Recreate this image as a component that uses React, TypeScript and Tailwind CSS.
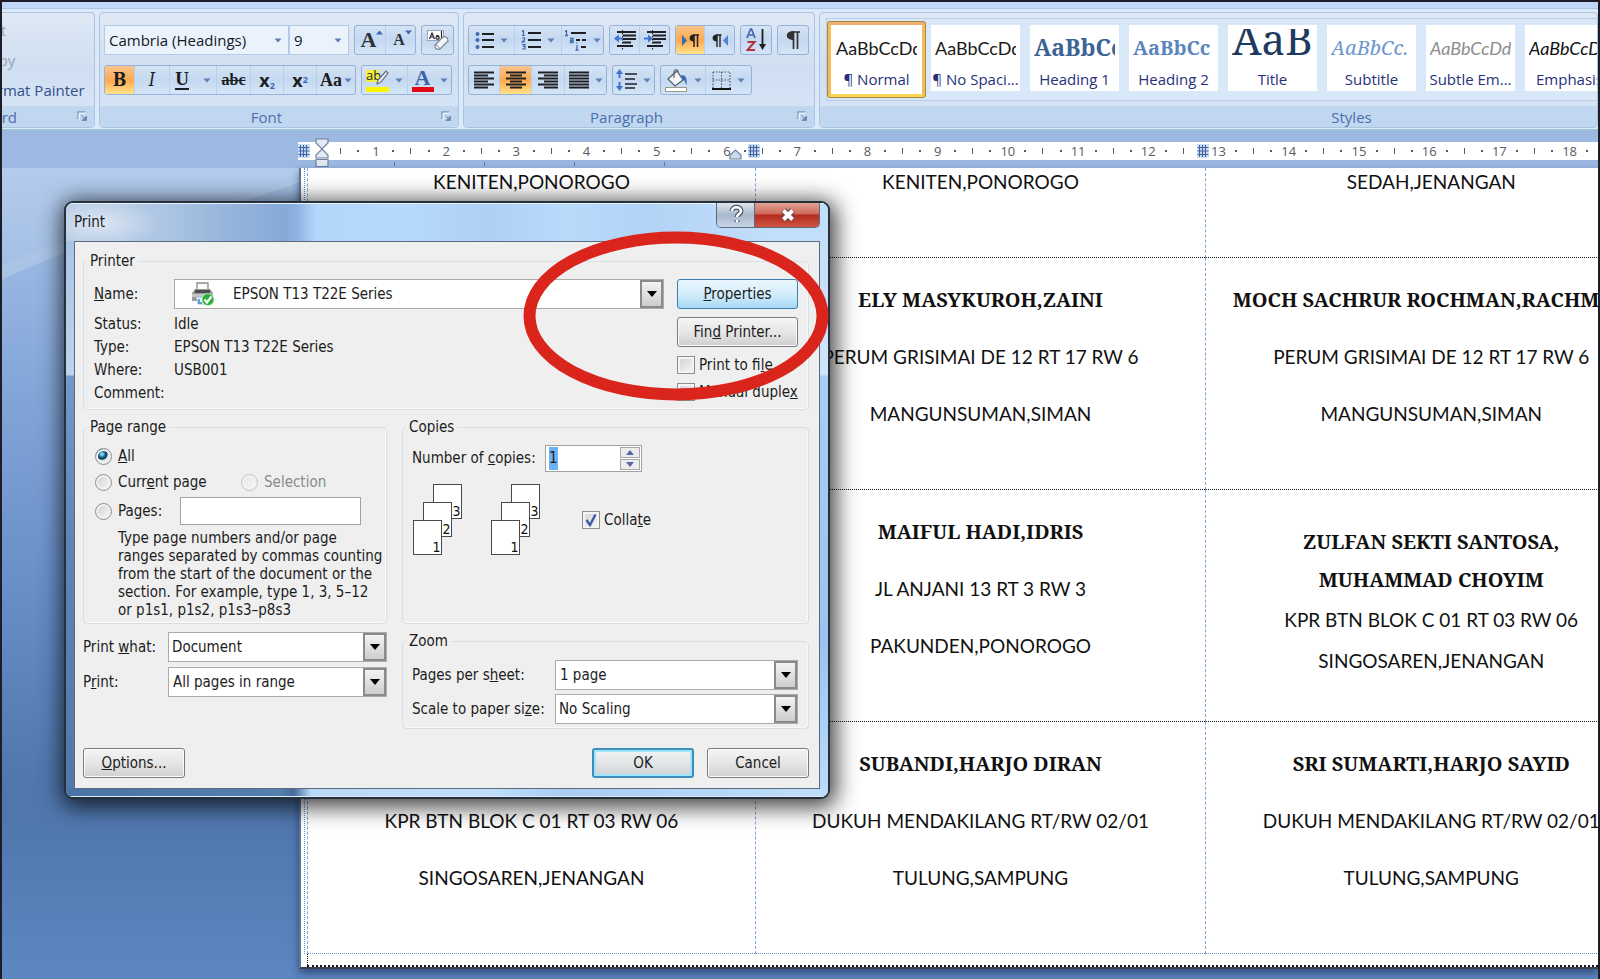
import { useEffect, useRef } from "react";
import type { ReactNode } from "react";

/* ---------- shared bits ---------- */

function Caret() {
  return (
    <svg width="8" height="5" viewBox="0 0 8 5" className="shrink-0" aria-hidden="true">
      <path d="M0.5 0.5h7L4 4.5z" fill="#5c7fb4" />
    </svg>
  );
}

function Cluster({ children }: { children: ReactNode }) {
  return (
    <div className="flex h-[30px] divide-x divide-[#b9cfea] overflow-hidden rounded-[3px] border border-[#96b2d8] bg-gradient-to-b from-[#d6e4f5] via-[#c4d8f0] to-[#d5e5f7]">
      {children}
    </div>
  );
}

function Tool({ label, active, className, children }: { label: string; active?: boolean; className: string; children: ReactNode }) {
  const tone = active ? "bg-gradient-to-b from-[#f9c48c] via-[#fba94e] to-[#ffe28a]" : "";
  return (
    <button type="button" aria-label={label} className={`flex items-center justify-center gap-1.5 ${tone} ${className}`}>
      {children}
    </button>
  );
}

function Launcher() {
  return (
    <svg width="11" height="11" viewBox="0 0 11 11" aria-hidden="true">
      <path d="M1 8V1h7" fill="none" stroke="#7d97bd" strokeWidth="1.4" />
      <path d="M2.2 8.5V2.2H8.5" fill="none" stroke="#fff" strokeWidth="1" />
      <path d="M4.5 4.5l3.5 3.5M9.5 5v4.5H5z" fill="#7088ad" stroke="#7088ad" strokeWidth="1" />
    </svg>
  );
}

function RibbonGroup({ title, className, titleClass = "pr-2 text-center", launcher = true, children }: { title: string; className: string; titleClass?: string; launcher?: boolean; children: ReactNode }) {
  return (
    <section className={`flex flex-col overflow-hidden rounded-[4px] border border-[#a9c3e2] bg-gradient-to-b from-[#dfe9f5] via-[#cfdef1] to-[#d9e8f8] ${className}`}>
      <div className="h-[93px]">{children}</div>
      <div className="flex h-[21px] items-center bg-[#c1d7f0] text-[#4a70ad]">
        <h2 className={`flex-1 text-[15px] leading-5 whitespace-nowrap ${titleClass}`}>{title}</h2>
        {launcher && <button type="button" aria-label={`${title} settings`} className="mr-[6px]"><Launcher /></button>}
      </div>
    </section>
  );
}

/* ---------- paragraph icons ---------- */

function Bullets() {
  return (
    <svg width="19" height="19" viewBox="0 0 19 19" aria-hidden="true">
      {[3, 9, 16].map((y) => (
        <g key={y}>
          <circle cx="2.5" cy={y} r="2" fill="#3f68b0" />
          <path d={`M7 ${y}h12`} stroke="#1f1f24" strokeWidth="2" />
        </g>
      ))}
    </svg>
  );
}

function Numbering() {
  return (
    <svg width="20" height="20" viewBox="0 0 20 20" aria-hidden="true">
      <path d="M7 3h13M7 10h13M7 17h13" stroke="#1f1f24" strokeWidth="2" />
      <path d="M1 1.5l1.5-1v5M1 5.5h3M1 8h2.5v2L1 12h3M1 14.5h3l-1.500 2h1.500v2.500H1" fill="none" stroke="#3f68b0" strokeWidth="1.200" />
    </svg>
  );
}

function Multilevel() {
  return (
    <svg width="23" height="21" viewBox="0 0 23 21" aria-hidden="true">
      <path d="M7 3h15M12 10h4M18 10h4M17 17h5" stroke="#1f1f24" strokeWidth="2" />
      <path d="M1 1.500l1.500-1v5M1 5.500h3M6 8.500h3v4H6.500v-2H9M13 15v5M13 12.500v1M11.500 20h3" fill="none" stroke="#3f68b0" strokeWidth="1.300" />
    </svg>
  );
}

function Indent({ out }: { out?: boolean }) {
  return (
    <svg width="22" height="20" viewBox="0 0 22 20" aria-hidden="true">
      <path d="M3 2h19M9 5.500h13M9 9h13M9 12.500h8M3 16h16" stroke="#1f1f24" strokeWidth="2" />
      <path d="M8.500 0v20" stroke="#1f1f24" strokeWidth="1" strokeDasharray="1.500 1.500" />
      {out ? <path d="M0 8.500l5-4v3h4v2H5v3z" fill="#3f74d0" /> : <path d="M9 8.500l-5-4v3H0v2h4v3z" fill="#3f74d0" />}
    </svg>
  );
}

const alignRows: Record<string, [number, number][]> = {
  left: [[0, 20], [0, 14], [0, 20], [0, 14], [0, 20], [0, 14]],
  center: [[0, 20], [4, 16], [0, 20], [4, 16], [0, 20], [4, 16]],
  right: [[0, 20], [6, 20], [0, 20], [6, 20], [0, 20], [6, 20]],
  full: [[0, 20], [0, 20], [0, 20], [0, 20], [0, 20], [0, 20]],
};

function Align({ kind }: { kind: string }) {
  return (
    <svg width="20" height="18" viewBox="0 0 20 18" aria-hidden="true">
      {alignRows[kind].map(([a, b], i) => (
        <path key={i} d={`M${a} ${1.5 + i * 3}H${b}`} stroke="#1f1f24" strokeWidth="1.900" />
      ))}
    </svg>
  );
}

function Spacing() {
  return (
    <svg width="21" height="22" viewBox="0 0 21 22" aria-hidden="true">
      <path d="M9 5h12M9 10h10M9 15h12M9 19h10" stroke="#1f1f24" strokeWidth="1.700" />
      <path d="M3.500 0L7 5H4.500v4h-2V5H0zM3.500 22L0 17h2.500v-4h2v4H7z" fill="#3f74d0" />
    </svg>
  );
}

function Sort() {
  return (
    <svg width="21" height="24" viewBox="0 0 21 24" aria-hidden="true">
      <path d="M1 10L4.500 1h1L9 10M2.500 7h5" fill="none" stroke="#3f68b0" strokeWidth="1.700" />
      <path d="M1.500 14h7L1.500 22h7.500" fill="none" stroke="#b0303c" strokeWidth="2" />
      <path d="M16.500 1v17" stroke="#1f1f24" strokeWidth="1.800" />
      <path d="M13 16h7l-3.500 6z" fill="#1f1f24" />
    </svg>
  );
}

function PaintBucket() {
  return (
    <svg width="23" height="23" viewBox="0 0 23 23" aria-hidden="true">
      <path d="M3 10L12 2l6 9-8 6z" fill="#f4f7fb" stroke="#59606c" strokeWidth="1.300" />
      <path d="M9 9V3c0-3 4-3 4 0" fill="none" stroke="#59606c" strokeWidth="1.200" />
      <path d="M16 6c6 0 6 5 5.500 10-2-3-1-5-3.500-5z" fill="#3668b8" />
      <rect x="0.500" y="18.500" width="21" height="4" fill="#fff" stroke="#9a9688" />
    </svg>
  );
}

function Borders() {
  return (
    <svg width="19" height="19" viewBox="0 0 19 19" aria-hidden="true">
      <path d="M1 1h17v16M1 1v16M9.500 1v16M1 9h17" fill="none" stroke="#4c5563" strokeWidth="1.200" strokeDasharray="1.400 1.500" />
      <path d="M0 18h19" stroke="#111" strokeWidth="2" />
    </svg>
  );
}

function Eraser() {
  return (
    <svg width="22" height="23" viewBox="0 0 22 23" aria-hidden="true">
      <rect x="0.500" y="1.500" width="16" height="10" fill="#fff" stroke="#9aa5b5" />
      <path d="M2.500 10L5 4l2.500 6M3.500 8h3M9 7c2-1 3 0 3 1v2c-2 .5-3.500 0-3-1.500s2-1 3-1M14.500 2v8" fill="none" stroke="#23262c" strokeWidth="1.200" />
      <path d="M8 16l8-8c3-1 5 1 5 4l-8 8c-3 1-6-1-5-4z" fill="#f6f6f8" stroke="#7c8595" strokeWidth="1.200" />
      <path d="M8 16c2 0 4 2 5 4" fill="none" stroke="#7c8595" />
    </svg>
  );
}

function RibbonRows({ children }: { children: ReactNode }) {
  return <div className="flex flex-col gap-[10px] px-1 pt-3">{children}</div>;
}

function FontGroup() {
  return (
    <RibbonGroup title="Font" className="w-[360px] shrink-0">
      <RibbonRows>
        <div className="flex">
          <div className="flex h-[30px] text-[15px] text-[#15181f]">
            <button type="button" className="flex w-[185px] items-center justify-between border border-[#b3cbe8] bg-[#eaf2fc] pr-1.5 pl-1">
              <span>Cambria (Headings)</span><Caret />
            </button>
            <button type="button" className="flex w-[60px] items-center justify-between border border-[#b3cbe8] bg-[#eaf2fc] pr-1.5 pl-1">
              <span>9</span><Caret />
            </button>
          </div>
          <div className="ml-[5px] flex gap-[5px] font-['Liberation_Serif',serif] font-bold text-[#2c3038]">
            <Cluster>
              <Tool label="Grow font" className="w-[31px] pl-1">
                <span className="flex text-[22px] leading-7">A<svg width="7" height="5" viewBox="0 0 7 5" className="mt-1" aria-hidden="true"><path d="M0 4.500L3.500 0.500 7 4.500z" fill="#3f68b0" /></svg></span>
              </Tool>
              <Tool label="Shrink font" className="w-[29px] pl-1">
                <span className="flex text-[16px] leading-8">A<svg width="7" height="5" viewBox="0 0 7 5" className="mt-1.5" aria-hidden="true"><path d="M0 0.500h7L3.500 4.500z" fill="#3f68b0" /></svg></span>
              </Tool>
            </Cluster>
            <Cluster><Tool label="Clear formatting" className="w-[31px]"><Eraser /></Tool></Cluster>
          </div>
        </div>
        <div className="flex gap-[5px] font-['Liberation_Serif',serif] text-[20px] leading-7 text-[#1c1e23]">
          <Cluster>
            <Tool label="Bold" active className="w-[30px]"><span className="font-['DejaVu_Serif_Condensed',serif] text-[18px] font-bold">B</span></Tool>
            <Tool label="Italic" className="w-[35px]"><span className="font-['DejaVu_Serif_Condensed',serif] text-[18px] italic">I</span></Tool>
            <Tool label="Underline" className="w-[47px]"><span className="border-b-2 border-[#1c1e23] text-[19px] leading-[18px] font-bold">U</span><span className="w-0.5" /><Caret /></Tool>
            <Tool label="Strikethrough" className="w-[34px]"><span className="text-[16px] font-bold line-through">abc</span></Tool>
            <Tool label="Subscript" className="w-[33px]"><span className="font-['Open_Sans',sans-serif] text-[18px] font-bold">x<sub className="text-[9px] text-[#3f68b0]">2</sub></span></Tool>
            <Tool label="Superscript" className="w-[33px]"><span className="font-['Open_Sans',sans-serif] text-[18px] font-bold">x<sup className="text-[9px] text-[#3f68b0]">2</sup></span></Tool>
            <Tool label="Change case" className="w-[38px]"><span className="-mr-1 text-[18px] font-bold">Aa</span><Caret /></Tool>
          </Cluster>
          <Cluster>
            <Tool label="Text highlight" className="w-[46px]">
              <svg width="23" height="23" viewBox="0 0 23 23" aria-hidden="true">
                <rect x="0" y="1" width="13" height="12" fill="#f4f03c" />
                <text x="0" y="11" fontFamily="Open Sans" fontSize="13" fill="#23262c">ab</text>
                <path d="M20 2l2 2-7 9-4 2 1-4z" fill="#e7ecf4" stroke="#5f6f8a" strokeWidth="1.200" />
                <rect x="0" y="18" width="23" height="5" fill="#fdf500" />
              </svg>
              <Caret />
            </Tool>
            <Tool label="Font colour" className="w-[43px]">
              <span className="flex w-[22px] flex-col items-center border-b-[5px] border-[#e30613] text-[22px] leading-[18px] font-bold text-[#3d64a8]">A</span>
              <Caret />
            </Tool>
          </Cluster>
        </div>
      </RibbonRows>
    </RibbonGroup>
  );
}

function ParagraphGroup() {
  return (
    <RibbonGroup title="Paragraph" className="w-[352px] shrink-0">
      <RibbonRows>
        <div className="flex gap-[5px]">
          <Cluster>
            <Tool label="Bullets" className="w-[46px]"><Bullets /><Caret /></Tool>
            <Tool label="Numbering" className="w-[47px]"><Numbering /><Caret /></Tool>
            <Tool label="Multilevel list" className="w-[41px]"><Multilevel /><Caret /></Tool>
          </Cluster>
          <Cluster>
            <Tool label="Decrease indent" className="w-[30px]"><Indent out /></Tool>
            <Tool label="Increase indent" className="w-[29px]"><Indent /></Tool>
          </Cluster>
          <Cluster>
            <Tool label="Left-to-right" active className="w-[29px]">
              <svg width="17" height="13" viewBox="0 0 17 13" aria-hidden="true"><path d="M0 1l5 5.500L0 12z" fill="#3f68b0" /><path d="M12 1v12M15.500 1v12M17 1h-6" stroke="#222" strokeWidth="1.500" /><path d="M12 0.500v7C6 7.500 6 0.500 12 0.500z" fill="#222" /></svg>
            </Tool>
            <Tool label="Right-to-left" className="w-[29px]">
              <svg width="17" height="13" viewBox="0 0 17 13" aria-hidden="true"><path d="M17 1l-5 5.500 5 5.500z" fill="#4f83d0" /><path d="M6 1v12M9 1v12M10.500 1H5" stroke="#222" strokeWidth="1.400" /><path d="M6 0.500v7C0 7.500 0 0.500 6 0.500z" fill="#222" /></svg>
            </Tool>
          </Cluster>
          <Cluster><Tool label="Sort" className="w-[30px]"><Sort /></Tool></Cluster>
          <Cluster>
            <Tool label="Show marks" className="w-[30px]">
              <svg width="14" height="18" viewBox="0 0 14 18" aria-hidden="true"><path d="M7.500 1v17M11.500 1v17M14 1H6" stroke="#333" strokeWidth="1.700" /><path d="M7.500 0v9C-1.500 9-1.500 0 7.500 0z" fill="#333" /></svg>
            </Tool>
          </Cluster>
        </div>
        <div className="flex gap-[5px]">
          <Cluster>
            <Tool label="Align left" className="w-[31px]"><Align kind="left" /></Tool>
            <Tool label="Centre" active className="w-[32px]"><Align kind="center" /></Tool>
            <Tool label="Align right" className="w-[33px]"><Align kind="right" /></Tool>
            <Tool label="Justify" className="w-[41px]"><Align kind="full" /><Caret /></Tool>
          </Cluster>
          <Cluster><Tool label="Line spacing" className="w-[41px]"><Spacing /><Caret /></Tool></Cluster>
          <Cluster>
            <Tool label="Shading" className="w-[45px]"><PaintBucket /><Caret /></Tool>
            <Tool label="Borders" className="w-[45px]"><Borders /><Caret /></Tool>
          </Cluster>
        </div>
      </RibbonRows>
    </RibbonGroup>
  );
}

const styles = [
  { name: "¶ Normal", sample: "AaBbCcDd", look: "font-['Lato',sans-serif] text-[18px] leading-[37px] text-[#1a1a1a]", on: true },
  { name: "¶ No Spaci...", sample: "AaBbCcDd", look: "font-['Lato',sans-serif] text-[18px] leading-[37px] text-[#1a1a1a]" },
  { name: "Heading 1", sample: "AaBbCc", look: "font-['Noto_Serif',serif] text-[23px] leading-[40px] font-bold text-[#3b6396]" },
  { name: "Heading 2", sample: "AaBbCc", look: "font-['Noto_Serif',serif] text-[20px] leading-[38px] font-bold text-[#5b86bd]" },
  { name: "Title", sample: "AaB", look: "font-['Noto_Serif',serif] text-[42px] leading-[56px] text-[#1e3a5f]" },
  { name: "Subtitle", sample: "AaBbCc.", look: "font-['Noto_Serif',serif] text-[20px] leading-[38px] italic text-[#6d97cc]" },
  { name: "Subtle Em...", sample: "AaBbCcDd", look: "font-['Lato',sans-serif] text-[18px] leading-[37px] italic text-[#8d8d8d]" },
  { name: "Emphasis", sample: "AaBbCcDd", look: "font-['Lato',sans-serif] text-[18px] leading-[37px] italic text-[#111]" },
];

function StylesGroup() {
  return (
    <RibbonGroup title="Styles" className="min-w-0 flex-1" titleClass="pl-[286px] text-center" launcher={false}>
      <div className="mt-[5px] ml-[6px] flex h-[83px] border-y border-l border-[#b9cfe9] bg-[#d9e8f8]">
        {styles.map((s) => (
          <button
            key={s.name}
            type="button"
            className={`my-0.5 flex w-[99px] shrink-0 flex-col items-center border-[4px] ${s.on ? "rounded-[3px] border-t-[#f0b070] border-r-[#f5bd58] border-b-[#fbd652] border-l-[#f5bd58] bg-white outline-1 -outline-offset-1 outline-[#a8864c]" : "border-transparent"}`}
          >
            <span className="flex h-[66px] w-[89px] flex-col bg-white px-1 pt-1">
              <span className={`flex h-[38px] items-end overflow-hidden whitespace-nowrap ${s.look}`}>{s.sample}</span>
              <span className="-mx-2 text-center text-[15px] leading-6 whitespace-nowrap text-[#28307a]">{s.name}</span>
            </span>
          </button>
        ))}
      </div>
    </RibbonGroup>
  );
}

function Ribbon() {
  return (
    <header className="bg-[#d3e3f6]">
      <div className="h-[6px] bg-[#c1d8f8]" />
      <div className="flex gap-1 overflow-hidden border-t border-[#a9c4e8] border-b-2 border-b-[#9cc4d8] bg-[#dbe9f8] pt-[3px] pb-px">
        <RibbonGroup title="Clipboard" className="-ml-1 w-[97px] shrink-0" titleClass="-ml-[50px] text-left">
          <div className="-ml-[19px] flex flex-col items-start gap-[10px] pt-[7px] text-[15px] leading-5 whitespace-nowrap">
            <button type="button" className="pl-0.5 text-[#9aa3b0]">Cut</button>
            <button type="button" className="text-[#9aa3b0]">Copy</button>
            <button type="button" className="text-[#34508c]">Format Painter</button>
          </div>
        </RibbonGroup>
        <FontGroup />
        <ParagraphGroup />
        <StylesGroup />
      </div>
    </header>
  );
}

/* ---------- ruler ---------- */

function GridMark() {
  return (
    <svg width="12" height="14" viewBox="0 0 12 14" aria-hidden="true">
      <rect width="12" height="14" fill="#cfe0f5" />
      <path d="M2.500 1v12M5.500 1v12M8.500 1v12M0.500 3.500h11M0.500 7h11M0.500 10.500h11" stroke="#3f66a3" strokeWidth="1.200" />
    </svg>
  );
}

function Ruler() {
  return (
    <div className="relative bg-[#9cb9e2] pt-[11px]">
      <div className="ml-[296px] flex h-[18px] bg-white pr-0.5 pl-[34px]">
        {Array.from({ length: 18 }, (_, i) => (
          <div key={i} className="grid flex-1 grid-cols-4 place-items-center text-[13px] leading-[18px] text-[#555b66]">
            <span className="h-1.5 w-px bg-[#555b66]" />
            <span className="size-0.5 bg-[#555b66]" />
            <span>{i + 1}</span>
            <span className="size-0.5 bg-[#555b66]" />
          </div>
        ))}
      </div>
      <div className="ml-[303px] flex h-2">
        {[0, 1, 2, 3].map((i) => (
          <span key={i} className="mt-0.5 h-1 w-[90px] border-r border-[#5f7ba8]" />
        ))}
      </div>
      <span className="absolute top-[13px] left-[296px]"><GridMark /></span>
      <span className="absolute top-[13px] left-[746px]"><GridMark /></span>
      <span className="absolute top-[13px] left-[1195px]"><GridMark /></span>
      <svg width="14" height="30" viewBox="0 0 14 30" className="absolute top-[7px] left-[313px]" aria-hidden="true">
        <path d="M1 1h12v4L7 11 1 5zM1 20v-3l6-6 6 6v3zM1 21.500h12v7H1z" fill="#e2e9f3" stroke="#6f829f" strokeWidth="1.200" />
      </svg>
      <svg width="13" height="11" viewBox="0 0 13 11" className="absolute top-[18px] left-[727px]" aria-hidden="true">
        <path d="M1 10V6l5.500-5L12 6v4z" fill="#cdd9ea" stroke="#6f829f" strokeWidth="1.200" />
      </svg>
    </div>
  );
}

/* ---------- document ---------- */

type Label = { names: string[]; lines: string[] };

const topRow = ["KENITEN,PONOROGO", "KENITEN,PONOROGO", "SEDAH,JENANGAN"];
const rows: Label[][] = [
  [
    { names: ["ELY MASYKUROH,ZAINI"], lines: ["PERUM GRISIMAI DE 12 RT 17 RW 6", "MANGUNSUMAN,SIMAN"] },
    { names: ["MOCH SACHRUR ROCHMAN,RACHMAD"], lines: ["PERUM GRISIMAI DE 12 RT 17 RW 6", "MANGUNSUMAN,SIMAN"] },
  ],
  [
    { names: ["MAIFUL HADI,IDRIS"], lines: ["JL ANJANI 13 RT 3 RW 3", "PAKUNDEN,PONOROGO"] },
    { names: ["ZULFAN SEKTI SANTOSA,", "MUHAMMAD CHOYIM"], lines: ["KPR BTN BLOK C 01 RT 03 RW 06", "SINGOSAREN,JENANGAN"] },
  ],
  [
    { names: ["SUBANDI,HARJO DIRAN"], lines: ["DUKUH MENDAKILANG RT/RW 02/01", "TULUNG,SAMPUNG"] },
    { names: ["SRI SUMARTI,HARJO SAYID"], lines: ["DUKUH MENDAKILANG RT/RW 02/01", "TULUNG,SAMPUNG"] },
  ],
];
const lastLeft = ["KPR BTN BLOK C 01 RT 03 RW 06", "SINGOSAREN,JENANGAN"];

const cell = "border-l border-dashed border-l-[#7fa6da] p-0 align-top whitespace-nowrap";

function LabelCell({ label }: { label: Label }) {
  const two = label.names.length > 1;
  return (
    <td className={`${cell} ${two ? "pt-[33px]" : "pt-[13px]"}`}>
      {label.names.map((n) => (
        <p key={n} className={`font-['Noto_Serif',serif] text-[20px] font-bold ${two ? "leading-[38px]" : "leading-[57px]"}`}>{n}</p>
      ))}
      {label.lines.map((l) => (
        <p key={l} className={two ? "leading-[41px]" : "leading-[57px]"}>{l}</p>
      ))}
    </td>
  );
}

function DocumentPage() {
  return (
    <div className="ml-[297px] overflow-hidden border-b-2 border-l-2 border-b-[#39424f] border-l-[#5d7595] bg-white pl-[3px] shadow-[0_4px_8px_rgba(20,40,80,0.6)]">
      <div className="border-l border-dotted border-[#5f93d6] pl-0.5">
        <table className="w-[1349px] table-fixed border-collapse border-b border-dotted border-b-[#5f93d6] text-center font-['Lato',sans-serif] text-[19px] text-[#111]">
          <colgroup><col className="w-[448px]" /><col className="w-[450px]" /><col className="w-[451px]" /></colgroup>
          <tbody>
            <tr className="h-[89px]">
              {topRow.map((t, i) => (
                <td key={i} className={`${cell} leading-7`}>{t}</td>
              ))}
            </tr>
            {rows.map((r, i) => (
              <tr key={i} className="h-[232px] border-t border-dotted border-t-[#111]">
                <td className={`${cell} pt-[70px]`}>
                  {i === 2 && lastLeft.map((l) => <p key={l} className="leading-[57px]">{l}</p>)}
                </td>
                {r.map((l) => <LabelCell key={l.names[0]} label={l} />)}
              </tr>
            ))}
          </tbody>
        </table>
      </div>
      <div className="ml-[3px] h-[13px] border-b-2 border-l border-dotted border-[#111]" />
    </div>
  );
}

/* ---------- print dialog ---------- */

const button = "flex h-[30px] w-full items-center justify-center rounded-[3px] border border-[#7b7b7b] bg-gradient-to-b from-[#f4f4f4] via-[#e6e6e6] to-[#cfcfcf] shadow-[inset_0_0_0_1px_#fbfbfb]";

function Picker({ id, value, className = "pl-1", children }: { id: string; value: string; className?: string; children?: ReactNode }) {
  return (
    <div className="relative h-[30px] flex-1">
      <select id={id} defaultValue={value} className={`h-full w-full appearance-none border border-[#ababab] bg-white ${className}`}>
        <option>{value}</option>
      </select>
      {children}
      <span className="pointer-events-none absolute inset-y-px right-px flex w-[23px] items-center justify-center border-2 border-[#8a8a8a] bg-gradient-to-b from-[#f3f3f3] to-[#cdcdcd]">
        <svg width="10" height="6" viewBox="0 0 10 6" aria-hidden="true"><path d="M0 0h10L5 6z" fill="#000" /></svg>
      </span>
    </div>
  );
}

function Group({ legend, className, children }: { legend: string; className: string; children: ReactNode }) {
  return (
    <fieldset className={`min-w-0 rounded-[4px] border border-[#d5dfe5] shadow-[inset_-1px_-1px_0_#fafafa] ${className}`}>
      <legend className="ml-[3px] px-[3px] leading-5">{legend}</legend>
      {children}
    </fieldset>
  );
}

const box = "grid size-[18px] shrink-0 appearance-none place-items-center border border-[#8f8f8f] bg-gradient-to-br from-[#cfd3d8] to-[#f6f6f6] shadow-[inset_0_0_0_2px_#f4f4f4]";
const radio = "size-[17px] shrink-0 appearance-none rounded-full border border-[#8b8f94] bg-gradient-to-br from-[#cdcfd2] to-[#fafafa] shadow-[inset_0_0_0_2px_#f1f1f1] disabled:border-[#c4c4c4] disabled:from-[#e4e4e4] checked:bg-[radial-gradient(circle_at_40%_35%,#7fd3f5_0_1px,#1b6a9c_3px,#0e3350_5px,#dfe6ec_6px)]";

function PrinterIcon() {
  return (
    <svg width="24" height="24" viewBox="0 0 24 24" className="pointer-events-none absolute top-[3px] left-[17px]" aria-hidden="true">
      <path d="M6 9V1h11v8" fill="#fbfbfb" stroke="#8d8d8d" strokeWidth="1.300" />
      <path d="M1 11l3-4h15l3 4v8H1z" fill="#9b9b9b" />
      <path d="M4 8h15v3H4z" fill="#4b4b4b" />
      <path d="M1 12h21v3H1z" fill="#c6c6c6" />
      <path d="M5 15h10v7H7z" fill="#e8f3fc" stroke="#8fa9c0" strokeWidth="0.800" />
      <path d="M8 17v4h3" fill="none" stroke="#3f86c8" strokeWidth="1.500" />
      <circle cx="17" cy="17.500" r="6" fill="#2fae35" stroke="#c9efc6" strokeWidth="0.800" />
      <path d="M13.500 17.500l2.500 3 4.500-6" fill="none" stroke="#fff" strokeWidth="2.200" />
    </svg>
  );
}

function PageStack() {
  return (
    <svg width="49" height="72" viewBox="0 0 49 72" aria-hidden="true">
      {[[20.5, 0.5, "3"], [10.5, 18.5, "2"], [0.5, 36.5, "1"]].map(([x, y, n]) => (
        <g key={n}>
          <rect x={x} y={y} width="28" height="34" fill="#fff" stroke="#4a4a4a" />
          <text x={Number(x) + 19} y={Number(y) + 31} fontFamily="DejaVu Sans Condensed" fontSize="14" fill="#111">{n}</text>
        </g>
      ))}
    </svg>
  );
}

function PrintDialog() {
  const copies = useRef<HTMLInputElement>(null);
  useEffect(() => {
    copies.current?.focus();
    copies.current?.select();
  }, []);

  return (
    <div role="dialog" aria-label="Print" className="absolute top-[33px] left-[62px] w-[766px] overflow-hidden rounded-[9px] border-2 border-[#26303c] bg-[#b9d9fa] font-['DejaVu_Sans_Condensed','DejaVu_Sans',sans-serif] text-[15px] text-[#1c1c1c] shadow-[2px_4px_22px_4px_rgba(0,0,0,0.75)]">
      <div className="flex h-[38px] items-start justify-between bg-[radial-gradient(ellipse_60px_26px_at_34px_20px,rgba(255,255,255,0.55),transparent),linear-gradient(90deg,#b4cae4_0,#afc7e4_90px,#94b3da_170px,#86aad8_220px,#8fb4e1_232px,#b3d7fb_250px,#b6dafc_340px,#aed0f3_420px,#b9dafb_500px,#b2d3f5_580px,#c1defb_700px)] pr-2 shadow-[inset_0_1px_0_#eaf4fd]">
        <h1 className="pl-2 leading-[38px]">Print</h1>
        <div className="flex h-[25px] overflow-hidden rounded-b-[5px] border border-t-0 border-[#5d6a7a]">
          <button type="button" aria-label="Help" className="w-[38px] border-r border-[#5d6a7a] bg-gradient-to-b from-[#dbe5ef] via-[#a9b9cb] to-[#c5d6e8]">
            <svg width="37" height="24" viewBox="0 0 37 24" aria-hidden="true">
              <path d="M15 8c0-5 9-5 9 0 0 3-4 3-4 6M20 17v2" fill="none" stroke="#4c5560" strokeWidth="5" />
              <path d="M15 8c0-5 9-5 9 0 0 3-4 3-4 6M20 17v2" fill="none" stroke="#fff" strokeWidth="2.600" />
            </svg>
          </button>
          <button type="button" aria-label="Close" className="w-[64px] bg-[linear-gradient(#e2a195_0,#cf6a5c_45%,#b32a1c_50%,#cf5441_100%)]">
            <svg width="64" height="24" viewBox="0 0 64 24" aria-hidden="true">
              <path d="M28.500 7.500l9 9M37.500 7.500l-9 9" stroke="#5f4a4a" strokeWidth="6.500" />
              <path d="M28.500 7.500l9 9M37.500 7.500l-9 9" stroke="#fff" strokeWidth="4" />
            </svg>
          </button>
        </div>
      </div>

      <div className="flex">
        <div className="w-2 bg-[linear-gradient(#a9c5e6_0,#bdd3ee_134px,#6f9acb_135px,#5d86b8_300px,#4f79ab_100%)]" />
        <form className="min-w-0 flex-1 border border-[#5b6a7c] bg-[#efefef] pt-[9px] pr-[10px] pb-[10px] pl-2" onSubmit={(e) => e.preventDefault()}>
          <Group legend="Printer" className="pb-1">
            <div className="flex gap-[13px] pt-2 pr-[10px] pl-[10px]">
              <div className="flex-1">
                <div className="flex items-center">
                  <label htmlFor="printer" className="w-20"><u>N</u>ame:</label>
                  <Picker id="printer" value="EPSON T13 T22E Series" className="pl-[58px]"><PrinterIcon /></Picker>
                </div>
                <dl className="mt-1 grid grid-cols-[80px_1fr] leading-[23px]">
                  <dt>Status:</dt><dd>Idle</dd>
                  <dt>Type:</dt><dd>EPSON T13 T22E Series</dd>
                  <dt>Where:</dt><dd>USB001</dd>
                  <dt>Comment:</dt><dd />
                </dl>
              </div>
              <div className="flex w-[121px] flex-col">
                <button type="button" className="flex h-[30px] items-center justify-center rounded-[3px] border border-[#3c7fb1] bg-gradient-to-b from-[#e9f6fd] via-[#d3edfb] to-[#a5d8f3]"><span><u>P</u>roperties</span></button>
                <button type="button" className={`mt-2 ${button}`}><span>Fin<u>d</u> Printer...</span></button>
                <label className="mt-[9px] flex h-[18px] items-center gap-1 whitespace-nowrap"><input type="checkbox" className={box} /><span>Print to fi<u>l</u>e</span></label>
                <label className="mt-[9px] flex h-[18px] items-center gap-1 whitespace-nowrap"><input type="checkbox" className={box} /><span>Manual duple<u>x</u></span></label>
              </div>
            </div>
          </Group>

          <div className="mt-[7px] flex gap-[15px]">
            <Group legend="Page range" className="w-[304px] shrink-0 pb-1">
              <div className="pt-2 pl-[11px]">
                <label className="flex h-[22px] items-center gap-1.5"><input type="radio" name="range" defaultChecked className={radio} /><span><u>A</u>ll</span></label>
                <div className="flex h-[30px] items-center">
                  <label className="flex w-[146px] items-center gap-1.5"><input type="radio" name="range" className={radio} /><span>Curr<u>e</u>nt page</span></label>
                  <label className="flex items-center gap-1.5 text-[#8a8a8a]"><input type="radio" name="range" disabled className={radio} />Selection</label>
                </div>
                <div className="flex h-7 items-center">
                  <label className="flex w-[85px] items-center gap-1.5"><input type="radio" name="range" className={radio} /><span>Pa<u>g</u>es:</span></label>
                  <input type="text" aria-label="Page numbers" className="h-full w-[181px] border border-[#a2a2a2] bg-white px-1" />
                </div>
                <p className="mt-1 w-[288px] pl-[23px] leading-[18px]">Type page numbers and/or page ranges separated by commas counting from the start of the document or the section. For example, type 1, 3, 5–12 or p1s1, p1s2, p1s3–p8s3</p>
              </div>
            </Group>
            <Group legend="Copies" className="flex-1">
              <div className="pt-2 pl-[9px]">
                <div className="flex items-center">
                  <label htmlFor="copies" className="w-[133px]">Number of <u>c</u>opies:</label>
                  <div className="flex h-[27px] w-[97px] border border-[#a2a2a2] bg-white p-px">
                    <input id="copies" ref={copies} type="text" inputMode="numeric" defaultValue="1" className="min-w-0 flex-1 pl-0.5 outline-none selection:bg-[#6fb1f5] selection:text-[#1c1c1c]" />
                    <div className="flex w-5 flex-col gap-px">
                      {["More copies", "Fewer copies"].map((l, i) => (
                        <button key={l} type="button" aria-label={l} className="flex flex-1 items-center justify-center border border-[#a8a8a8] bg-[#ececec]">
                          <svg width="8" height="5" viewBox="0 0 8 5" aria-hidden="true"><path d={i ? "M0 0h8L4 5z" : "M0 5h8L4 0z"} fill="#5469a8" /></svg>
                        </button>
                      ))}
                    </div>
                  </div>
                </div>
                <div className="mt-3 flex items-center pl-px">
                  <PageStack />
                  <span className="w-[29px]" />
                  <PageStack />
                  <label className="ml-[42px] flex items-center gap-1">
                    <span className="relative flex">
                      <input type="checkbox" defaultChecked className={box} />
                      <svg width="12" height="14" viewBox="0 0 12 14" className="pointer-events-none absolute top-[2px] left-[3px]" aria-hidden="true"><path d="M1.500 7l3.500 5L10.500 1.500" fill="none" stroke="#4559a3" strokeWidth="2.400" /></svg>
                    </span>
                    <span>Colla<u>t</u>e</span>
                  </label>
                </div>
              </div>
            </Group>
          </div>

          <div className="mt-[7px] flex gap-[15px]">
            <div className="flex w-[304px] shrink-0 flex-col gap-[5px] pt-px">
              <div className="flex items-center"><label htmlFor="what" className="w-[85px]">Print <u>w</u>hat:</label><Picker id="what" value="Document" className="pl-[3px]" /></div>
              <div className="flex items-center"><label htmlFor="subset" className="w-[85px]">P<u>r</u>int:</label><Picker id="subset" value="All pages in range" /></div>
            </div>
            <Group legend="Zoom" className="flex-1 pb-1">
              <div className="flex flex-col gap-1 pt-[9px] pr-[10px] pl-[9px]">
                <div className="flex items-center"><label htmlFor="sheet" className="w-[143px]">Pages per s<u>h</u>eet:</label><Picker id="sheet" value="1 page" /></div>
                <div className="flex items-center"><label htmlFor="scale" className="w-[143px]">Scale to paper si<u>z</u>e:</label><Picker id="scale" value="No Scaling" className="pl-[3px]" /></div>
              </div>
            </Group>
          </div>

          <div className="mt-[19px] flex justify-between">
            <div className="w-[102px]"><button type="button" className={button}><span><u>O</u>ptions...</span></button></div>
            <div className="flex gap-[13px]">
              <div className="w-[102px]"><button type="submit" className="flex h-[30px] w-full items-center justify-center rounded-[3px] border-2 border-[#3b8fb8] bg-gradient-to-b from-[#f0f4f5] via-[#e3e6e7] to-[#cfd3d5] shadow-[inset_0_0_0_2px_#9fe4fa]">OK</button></div>
              <div className="w-[102px]"><button type="button" className={button}>Cancel</button></div>
            </div>
          </div>
        </form>
        <div className="w-2 bg-[linear-gradient(#c4dff9_0,#cfe4fa_134px,#a9cdf4_135px,#9cc3ef_400px,#b9dafb_100%)]" />
      </div>
      <div className="h-2 bg-[linear-gradient(90deg,#4b74a6_0,#567fae_215px,#466b9a_228px,#bad9f9_245px,#c0defc_420px,#a9ccf3_500px,#c0defc_100%)] shadow-[inset_0_-1px_0_#dcebfa]" />
    </div>
  );
}

export default function App() {
  return (
    <div className="flex min-h-screen flex-col overflow-hidden border-2 border-[#1d1d28] bg-[#5d86c0] font-['Open_Sans','Noto_Sans',sans-serif]">
      <Ribbon />
      <Ruler />
      <main className="relative flex-1 bg-[linear-gradient(#a9c5ea_0,#98b7e2_12%,#82a5d8_28%,#6a90c9_50%,#5077ae_75%,#4f77ae_80%,#5d87c1_100%)] pb-[10px]">
        <svg width="297" height="190" viewBox="0 0 297 190" className="absolute top-0 left-0" aria-hidden="true">
          <path d="M0 0h297v12C200 45 90 60 0 96z" fill="#fff" opacity="0.120" />
          <path d="M0 96C90 60 200 45 297 12v2C200 50 90 66 0 112z" fill="#fff" opacity="0.180" />
        </svg>
        <DocumentPage />
        <PrintDialog />
        <svg width="306" height="170" viewBox="0 0 306 170" className="pointer-events-none absolute top-[63px] left-[521px]" aria-hidden="true">
          <ellipse cx="153" cy="85" rx="146.500" ry="78.500" fill="none" stroke="#da251c" strokeWidth="12" />
        </svg>
      </main>
    </div>
  );
}
